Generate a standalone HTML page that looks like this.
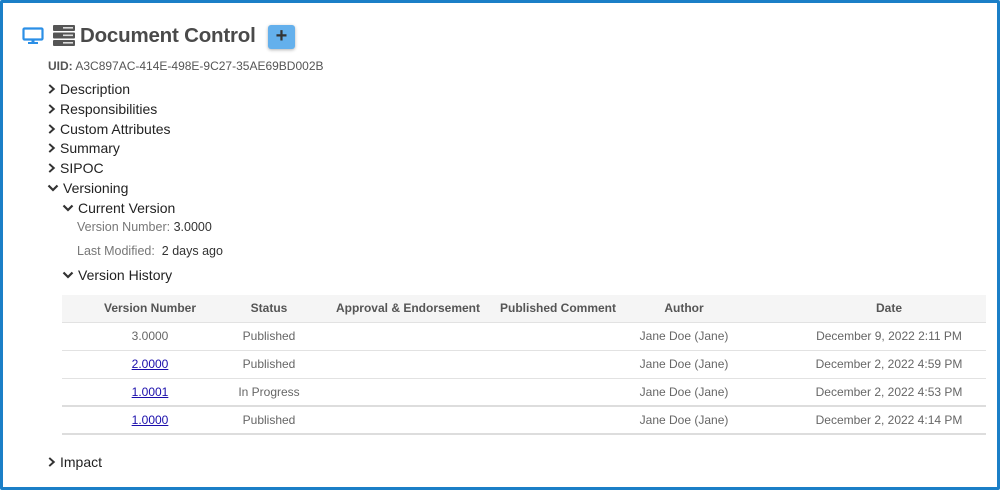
<!DOCTYPE html>
<html><head><style>
*{margin:0;padding:0;box-sizing:border-box}
body{width:1000px;height:490px;overflow:hidden;background:#fff;font-family:"Liberation Sans",Arial,sans-serif;color:#333}
.frame{position:absolute;left:0;top:0;width:1000px;height:490px;border:3px solid #1b7fc7;border-radius:2px}
.abs{position:absolute;white-space:nowrap}
.item{position:absolute;left:47px;font-size:14px;color:#222;display:flex;align-items:center}
.item svg{margin-right:4px}
.g{color:#777}
table{position:absolute;left:62px;top:295px;width:924px;border-collapse:collapse;font-size:12px;table-layout:fixed;white-space:nowrap}
th{background:#f5f5f5;color:#555;font-weight:bold;height:27px;text-align:center;border-bottom:1px solid #e2e2e2;overflow:visible}
td{height:28px;text-align:center;color:#666;border-bottom:1px solid #e2e2e2}
th:nth-child(3){padding-left:16px}
th:nth-child(6),td:nth-child(6){padding-left:32px}
tr.last td{border-bottom:2px solid #ddd}
tr.sep td{border-bottom:2px solid #ddd}
a{color:#1a0dab;text-decoration:underline}
</style></head><body>
<div class="frame"></div>
<svg class="abs" style="left:22px;top:27px" width="22" height="18" viewBox="0 0 22 18"><rect x="1.5" y="1.5" width="19" height="11" rx="1" fill="none" stroke="#2b8fe6" stroke-width="2.2"/><rect x="9.5" y="12" width="3" height="3" fill="#2b8fe6"/><rect x="6" y="15" width="10" height="2" fill="#2b8fe6"/></svg>
<svg class="abs" style="left:53px;top:25px" width="22" height="21" viewBox="0 0 22 21"><rect x="0" y="0" width="22" height="6" rx="1" fill="#555"/><rect x="0" y="7.5" width="22" height="6" rx="1" fill="#555"/><rect x="0" y="15" width="22" height="6" rx="1" fill="#555"/><rect x="10" y="2" width="10" height="1.6" fill="#ddd"/><rect x="10" y="9.5" width="10" height="1.6" fill="#ddd"/><rect x="10" y="17" width="10" height="1.6" fill="#ddd"/></svg>
<div class="abs" style="left:80px;top:24px;font-size:20.5px;font-weight:bold;color:#4a4a4a;letter-spacing:-0.2px">Document Control</div>
<div class="abs" style="left:268px;top:25px;width:27px;height:24px;background:#64b0ec;border-radius:3px;box-shadow:0 1px 3px rgba(0,0,0,.3);color:#333;font-size:20px;font-weight:bold;text-align:center;line-height:23px">+</div>
<div class="abs" style="left:48px;top:59px;font-size:12px;color:#555"><b>UID:</b> A3C897AC-414E-498E-9C27-35AE69BD002B</div>
<svg width="0" height="0" style="position:absolute"><defs>
<symbol id="r" viewBox="0 0 10 12"><path d="M2.5 1.5 L7.5 6 L2.5 10.5" fill="none" stroke="#333" stroke-width="2.2"/></symbol>
<symbol id="d" viewBox="0 0 12 10"><path d="M1.5 2.5 L6 7 L10.5 2.5" fill="none" stroke="#333" stroke-width="2.2"/></symbol></defs></svg>
<div class="item" style="top:81px"><svg width="9" height="12"><use href="#r"/></svg>Description</div>
<div class="item" style="top:101px"><svg width="9" height="12"><use href="#r"/></svg>Responsibilities</div>
<div class="item" style="top:121px"><svg width="9" height="12"><use href="#r"/></svg>Custom Attributes</div>
<div class="item" style="top:140px"><svg width="9" height="12"><use href="#r"/></svg>Summary</div>
<div class="item" style="top:160px"><svg width="9" height="12"><use href="#r"/></svg>SIPOC</div>
<div class="item" style="top:180px"><svg width="12" height="10"><use href="#d"/></svg>Versioning</div>
<div class="item" style="top:200px;left:62px"><svg width="12" height="10"><use href="#d"/></svg>Current Version</div>
<div class="abs" style="left:77px;top:220px;font-size:12.5px"><span class="g">Version Number:</span> 3.0000</div>
<div class="abs" style="left:77px;top:244px;font-size:12.5px"><span class="g">Last Modified:</span>&nbsp; 2 days ago</div>
<div class="item" style="top:267px;left:62px"><svg width="12" height="10"><use href="#d"/></svg>Version History</div>
<table>
<colgroup><col style="width:176px"><col style="width:62px"><col style="width:200px"><col style="width:108px"><col style="width:152px"><col></colgroup>
<tr><th>Version Number</th><th>Status</th><th>Approval &amp; Endorsement</th><th>Published Comment</th><th>Author</th><th>Date</th></tr>
<tr><td>3.0000</td><td>Published</td><td></td><td></td><td>Jane Doe (Jane)</td><td>December 9, 2022 2:11 PM</td></tr>
<tr><td><a>2.0000</a></td><td>Published</td><td></td><td></td><td>Jane Doe (Jane)</td><td>December 2, 2022 4:59 PM</td></tr>
<tr class="sep"><td><a>1.0001</a></td><td>In Progress</td><td></td><td></td><td>Jane Doe (Jane)</td><td>December 2, 2022 4:53 PM</td></tr>
<tr class="last"><td><a>1.0000</a></td><td>Published</td><td></td><td></td><td>Jane Doe (Jane)</td><td>December 2, 2022 4:14 PM</td></tr>
</table>
<div class="item" style="top:454px"><svg width="9" height="12"><use href="#r"/></svg>Impact</div>
</body></html>
